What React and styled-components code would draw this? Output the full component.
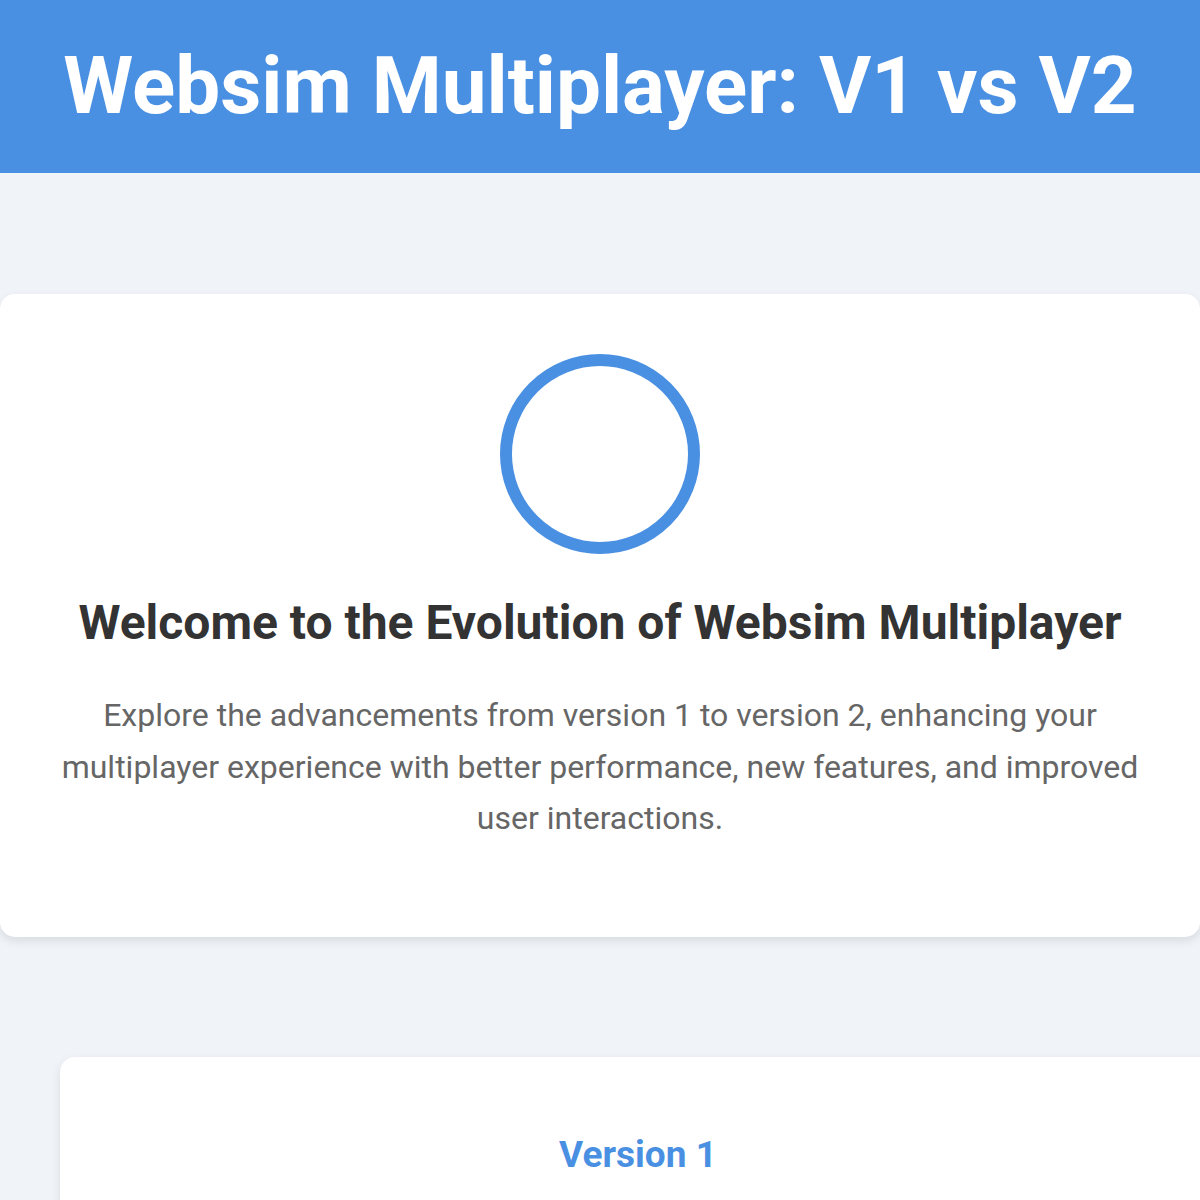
import React from 'react';
import styled, { createGlobalStyle } from 'styled-components';

const GlobalStyle = createGlobalStyle`
  body {
    margin: 0;
    background: #f0f4f8;
    font-family: Roboto, "Liberation Sans", sans-serif;
    overflow-x: hidden;
  }
`;

const Header = styled.header`
  background: #4a90e2;
  padding: 38px 0 39px;
  text-align: center;
`;

const Title = styled.h1`
  margin: 0;
  color: #fff;
  font-size: 80px;
  font-weight: 700;
  line-height: 96px;
`;

const Main = styled.main`
  padding-top: 121px;
`;

const Hero = styled.section`
  background: #fff;
  border-radius: 15px;
  box-shadow: 0 4px 10px rgba(0, 0, 0, 0.1);
  padding: 60px 60px 92px;
  display: flex;
  flex-direction: column;
  align-items: center;
  text-align: center;
`;

const Ring = styled.div`
  width: 200px;
  height: 200px;
  box-sizing: border-box;
  border: 12px solid #4a90e2;
  border-radius: 50%;
`;

const Heading = styled.h2`
  margin: 41px 0 39px;
  color: #333;
  font-size: 48px;
  font-weight: 700;
  line-height: 56px;
`;

const Lead = styled.p`
  margin: 0;
  color: #666;
  font-size: 32px;
  line-height: 51.5px;
`;

const Compare = styled.section`
  margin-top: 120px;
  padding-left: 60px;
  display: flex;
`;

const Card = styled.div`
  flex: 0 0 1156px;
  background: #fff;
  border-radius: 15px;
  box-shadow: 0 4px 10px rgba(0, 0, 0, 0.1);
  padding: 60px;
  box-sizing: border-box;
  text-align: center;
`;

const CardTitle = styled.h3`
  margin: 16px 0 0;
  color: #4a90e2;
  font-size: 37px;
  font-weight: 700;
`;

export default function App() {
  return (
    <>
      <GlobalStyle />
      <Header>
        <Title>Websim Multiplayer: V1 vs V2</Title>
      </Header>
      <Main>
        <Hero>
          <Ring />
          <Heading>Welcome to the Evolution of Websim Multiplayer</Heading>
          <Lead>
            Explore the advancements from version 1 to version 2, enhancing your
            multiplayer experience with better performance, new features, and
            improved user interactions.
          </Lead>
        </Hero>
        <Compare>
          <Card>
            <CardTitle>Version 1</CardTitle>
          </Card>
        </Compare>
      </Main>
    </>
  );
}
